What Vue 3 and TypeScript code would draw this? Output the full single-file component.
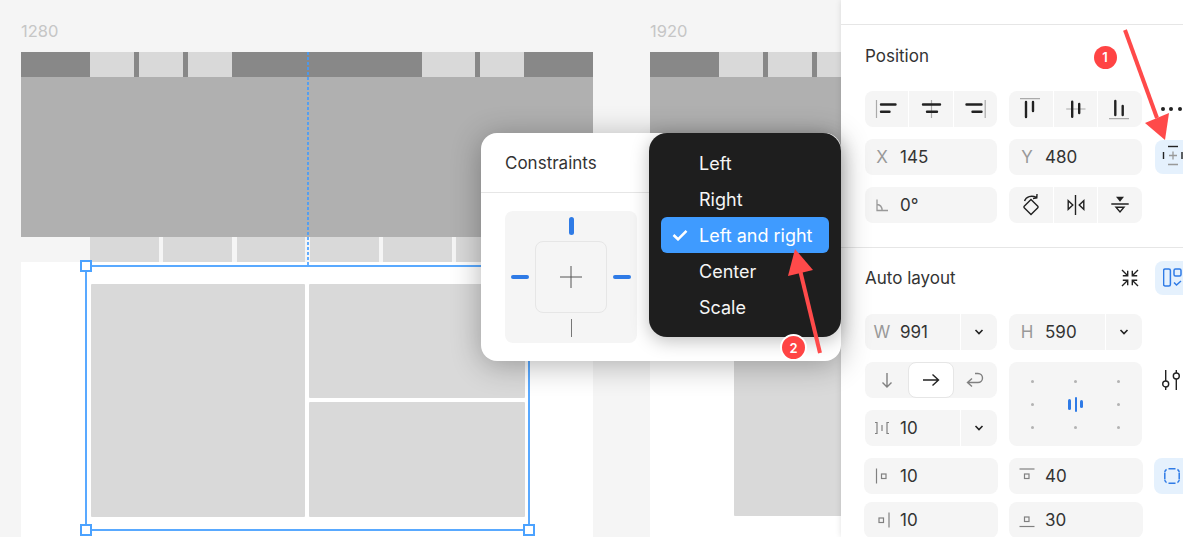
<script setup lang="ts">
type HeaderCell = { width: number; dark: boolean }

const headerCells: HeaderCell[] = [
  { width: 69, dark: true },
  { width: 44, dark: false },
  { width: 5, dark: true },
  { width: 44, dark: false },
  { width: 5, dark: true },
  { width: 44, dark: false },
  { width: 190, dark: true },
  { width: 53, dark: false },
  { width: 5, dark: true },
  { width: 44, dark: false },
  { width: 69, dark: true }
]

const frames = ['1280', '1920']
const constraintOptions = ['Left', 'Right', 'Left and right', 'Center', 'Scale']
const selectedOption = 'Left and right'
const alignDots = [0, 1, 2, 3, 5, 6, 7, 8]
</script>

<template>
  <div class="editor">
    <main class="canvas">
      <section v-for="(label, frameIndex) in frames" :key="label" class="frame">
        <div class="frame__label">{{ label }}</div>
        <div class="frame__header">
          <div
            v-for="(cell, i) in headerCells"
            :key="i"
            :class="cell.dark ? 'cell-dark' : 'cell-light'"
            :style="{ width: cell.width + 'px' }"
          ></div>
        </div>
        <div class="frame__hero"></div>
        <div class="frame__strip">
          <div v-for="n in 6" :key="n" class="cell-light"></div>
        </div>
        <div v-if="frameIndex === 0" class="frame__body">
          <div class="tile tile--tall"></div>
          <div class="tile"></div>
          <div class="tile"></div>
        </div>
        <div v-else class="frame__body frame__body--wide">
          <div class="tile"></div>
        </div>

        <template v-if="frameIndex === 0">
          <div class="guide"></div>
          <div class="selection">
            <span class="handle handle--tl"></span>
            <span class="handle handle--tr"></span>
            <span class="handle handle--bl"></span>
            <span class="handle handle--br"></span>
          </div>
        </template>
      </section>
    </main>

    <aside class="panel">
      <div class="panel__top"></div>

      <section class="section">
        <div class="section__head section__head--position">Position</div>

        <div class="row">
          <div class="group">
            <button class="group__cell"><svg class="ic" viewBox="0 0 24 24"><path class="g" d="M1.5 3v18"/><path class="b" d="M6 7.5h14.5M6 14.7h8.5"/></svg></button>
            <button class="group__cell"><svg class="ic" viewBox="0 0 24 24"><path class="g" d="M12.5 3v18"/><path class="b" d="M4 7.5h17M8 14.7h10"/></svg></button>
            <button class="group__cell"><svg class="ic" viewBox="0 0 24 24"><path class="g" d="M22.2 3v18"/><path class="b" d="M3.5 7.5h15M9.5 14.7h9"/></svg></button>
          </div>
          <div class="group group--wide">
            <button class="group__cell"><svg class="ic" viewBox="0 0 24 24"><path class="g" d="M1 1.7h20"/><path class="b" d="M7 5v15M14 5v9"/></svg></button>
            <button class="group__cell"><svg class="ic" viewBox="0 0 24 24"><path class="g" d="M2.2 12h19.3"/><path class="b" d="M8.2 4.7v15M15.2 7v9"/></svg></button>
            <button class="group__cell"><svg class="ic" viewBox="0 0 24 24"><path class="g" d="M1 21.7h20"/><path class="b" d="M7.3 4v14M14.7 9v9"/></svg></button>
          </div>
          <div class="more"><i></i><i></i><i></i></div>
        </div>

        <div class="row">
          <div class="field"><span class="field__label">X</span><span>145</span></div>
          <div class="field field--right"><span class="field__label">Y</span><span>480</span></div>
          <button class="toggle">
            <svg width="28" height="24" viewBox="0 0 28 24"><path class="line-dark" d="M12 1.500h10"/><path class="line-grey" d="M12 19.500h10M17 6.500v8M13 10.500h8"/><path class="line-dark" d="M7.500 7v7M26 7v7"/></svg>
          </button>
        </div>

        <div class="row">
          <div class="field">
            <span class="field__label">
              <svg width="14" height="14" viewBox="0 0 14 14"><path class="line-grey" d="M2 1.500v11h11M2 6.500c3 .2 5 2.500 5.200 6"/></svg>
            </span>
            <span>0°</span>
          </div>
          <div class="group group--wide">
            <button class="group__cell">
              <svg class="ic" viewBox="0 0 24 24">
                <path class="line-dark" d="M12 6.500l6.800 6.800a1 1 0 0 1 0 1.400L12 21.500l-6.800-6.800a1 1 0 0 1 0-1.400z"/>
                <path class="line-dark" d="M5.500 8c1.500-4.500 7-6 12-3.500M18 1l-.2 4-3.800.5"/>
              </svg>
            </button>
            <button class="group__cell">
              <svg class="ic" viewBox="0 0 24 24">
                <path class="line-dark" d="M11.500 2v20M4.200 7.700v8.600l4.600-4.300z"/>
                <path class="line-dark" d="M19.800 7.700v8.600l-4.600-4.300z"/>
              </svg>
            </button>
            <button class="group__cell">
              <svg class="ic" viewBox="0 0 24 24">
                <path class="line-dark" d="M3.300 11h17.400M8 14.300h8l-4 4.700z"/>
                <path class="solid" d="M8 3.700h8l-4 5z"/>
              </svg>
            </button>
          </div>
        </div>
      </section>

      <section class="section section--auto">
        <div class="section__head">
          <span>Auto layout</span>
          <div class="section__tools">
            <svg width="18" height="18" viewBox="0 0 18 18">
              <path class="line-dark" d="M1 1l5.500 5.500M6.700 1.800v4.900H1.800M17 1l-5.500 5.500M11.300 1.800v4.900h4.900M1 17l5.500-5.500M6.700 16.200v-4.900H1.800M17 17l-5.500-5.500M11.300 16.200v-4.900h4.900"/>
            </svg>
            <button class="toggle toggle--head">
              <svg width="22" height="20" viewBox="0 0 22 20">
                <rect class="line-blue" x=".6" y="1" width="6.800" height="17" rx="1.500"/>
                <rect class="line-blue" x="11" y="1" width="7" height="7" rx="1.500"/>
                <path class="line-blue" d="M11 14.500l2.500 2.500 4.500-4"/>
              </svg>
            </button>
          </div>
        </div>

        <div class="row">
          <div class="field field--select">
            <span class="field__label">W</span><span class="field__value">991</span>
            <span class="field__chevron"><svg width="10" height="6" viewBox="0 0 10 6"><path class="line-dark line-bold" d="M1.500 1l3.500 3.500L8.500 1"/></svg></span>
          </div>
          <div class="field field--select field--right field--wide">
            <span class="field__label">H</span><span class="field__value">590</span>
            <span class="field__chevron"><svg width="10" height="6" viewBox="0 0 10 6"><path class="line-dark line-bold" d="M1.500 1l3.500 3.500L8.500 1"/></svg></span>
          </div>
        </div>

        <div class="flow">
          <div class="flow__left">
            <div class="direction">
              <button class="direction__btn">
                <svg width="16" height="16" viewBox="0 0 16 16"><path class="line-mid" d="M8 1v14M3.500 10.500L8 15l4.500-4.500"/></svg>
              </button>
              <button class="direction__btn direction__btn--on">
                <svg width="18" height="16" viewBox="0 0 18 16"><path class="line-dark" d="M1 8h15.500M10.500 2.500L16.500 8l-6 5.500"/></svg>
              </button>
              <button class="direction__btn">
                <svg width="18" height="16" viewBox="0 0 18 16"><path class="line-mid" d="M6 14.500L1.500 10.500 6 6.500M1.500 10.500h10.500a4.500 4.500 0 0 0 0-9H9"/></svg>
              </button>
            </div>
            <div class="field field--select">
              <span class="field__label">
                <svg width="16" height="14" viewBox="0 0 16 14"><path class="line-grey-dark" d="M1 1.500h2v11H1M8 4v6M15 1.500h-2v11h2"/></svg>
              </span>
              <span class="field__value">10</span>
              <span class="field__chevron"><svg width="10" height="6" viewBox="0 0 10 6"><path class="line-dark line-bold" d="M1.500 1l3.500 3.500L8.500 1"/></svg></span>
            </div>
          </div>

          <div class="align-grid">
            <template v-for="i in alignDots" :key="i">
              <span class="align-grid__dot" :style="{ gridColumn: (i % 3) + 1, gridRow: Math.floor(i / 3) + 1 }"></span>
            </template>
            <span class="align-grid__active">
              <i class="bar bar--mid"></i><i class="bar bar--long"></i><i class="bar bar--short"></i>
            </span>
          </div>

          <svg class="sliders" width="18" height="22" viewBox="0 0 18 22">
            <path class="line-dark" d="M3.700 1v11M3.700 18v3M14.300 1v3M14.300 10v11"/>
            <circle class="line-dark" cx="3.700" cy="15" r="3"/>
            <circle class="line-dark" cx="14.300" cy="7" r="3"/>
          </svg>
        </div>

        <div class="row row--padding">
          <div class="field">
            <span class="field__label">
              <svg width="16" height="16" viewBox="0 0 16 16"><path class="line-grey-dark" d="M2.500 .5v15"/><rect class="line-grey-dark" x="7.500" y="6" width="4.500" height="4.500"/></svg>
            </span>
            <span>10</span>
          </div>
          <div class="field field--right">
            <span class="field__label">
              <svg width="16" height="16" viewBox="0 0 16 16"><path class="line-grey-dark" d="M.5 1h15"/><rect class="line-grey-dark" x="5.500" y="6" width="4.500" height="4.500"/></svg>
            </span>
            <span>40</span>
          </div>
          <button class="toggle toggle--padding">
            <svg width="16" height="16" viewBox="0 0 16 16"><path class="line-blue" d="M4.500 .8h7M4.500 15.200h7M.8 4.500v7M15.200 4.500v7M.8 4a3.400 3.400 0 0 1 1.800-2.500M15.200 4a3.400 3.400 0 0 0-1.800-2.500M.8 12a3.400 3.400 0 0 0 1.800 2.500M15.200 12a3.400 3.400 0 0 1-1.800 2.500"/></svg>
          </button>
        </div>
        <div class="row row--padding">
          <div class="field">
            <span class="field__label">
              <svg width="16" height="16" viewBox="0 0 16 16"><rect class="line-grey-dark" x="5" y="6" width="4.500" height="4.500"/><path class="line-grey-dark" d="M15 .5v15"/></svg>
            </span>
            <span>10</span>
          </div>
          <div class="field field--right">
            <span class="field__label">
              <svg width="16" height="16" viewBox="0 0 16 16"><rect class="line-grey-dark" x="5.500" y="5" width="4.500" height="4.500"/><path class="line-grey-dark" d="M.5 14.500h15"/></svg>
            </span>
            <span>30</span>
          </div>
        </div>
      </section>
    </aside>

    <div class="popover">
      <div class="popover__head">Constraints</div>
      <div class="popover__body">
        <div class="constraint">
          <span class="pin pin--v pin--top"></span>
          <span class="pin pin--h pin--left"></span>
          <div class="constraint__box">
            <svg width="22" height="22" viewBox="0 0 22 22"><path d="M11 0v22M0 11h22" stroke="#555" stroke-width="1" fill="none"/></svg>
          </div>
          <span class="pin pin--h pin--right"></span>
          <span class="pin pin--thin pin--bottom"></span>
        </div>
      </div>

      <ul class="menu">
        <li
          v-for="option in constraintOptions"
          :key="option"
          class="menu__item"
          :class="{ 'menu__item--on': option === selectedOption }"
        >
          <svg v-if="option === selectedOption" class="menu__check" width="16" height="12" viewBox="0 0 16 12"><path d="M1.500 6l4.500 4.300L14.500 1.800" stroke="#fff" stroke-width="2.600" fill="none"/></svg>
          {{ option }}
        </li>
      </ul>
    </div>

    <svg class="marks" width="1183" height="537" viewBox="0 0 1183 537">
      <path class="marks__line" d="M1125 30L1157 118"/>
      <path class="marks__head" d="M1165 140L1145 123L1169 113z"/>
      <path class="marks__line" d="M820 353L800 270"/>
      <path class="marks__head" d="M795 249L788 276L813 270z"/>
    </svg>
    <span class="badge badge--one">1</span>
    <span class="badge badge--two">2</span>
  </div>
</template>

<style>
html,
body {
  margin: 0;
  background: #fff;
}
</style>

<style scoped>
.editor {
  position: relative;
  display: flex;
  width: 1183px;
  height: 537px;
  overflow: hidden;
  font-family: Inter, "Liberation Sans", sans-serif;
  font-size: 17px;
  color: #333;
}

button {
  appearance: none;
  border: none;
  padding: 0;
  background: transparent;
  font: inherit;
}

svg {
  display: block;
  fill: none;
}

/* canvas */
.canvas {
  flex: 0 0 841px;
  display: flex;
  gap: 57px;
  padding: 21px 0 0 21px;
  box-sizing: border-box;
  overflow: hidden;
  background: #f5f5f5;
}

.frame {
  position: relative;
  flex: 0 0 572px;
}

.frame__label {
  height: 20px;
  margin-bottom: 11px;
  font-size: 16.500px;
  line-height: 20px;
  color: #c6c6c6;
}

.frame__header {
  display: flex;
  height: 25px;
}

.cell-dark {
  background: #888;
}

.cell-light {
  background: #d9d9d9;
}

.frame__hero {
  height: 160px;
  background: #b0b0b0;
}

.frame__strip {
  display: grid;
  grid-template-columns: repeat(6, 1fr);
  gap: 4.500px;
  width: 435px;
  height: 25px;
  margin-left: 69px;
}

.frame__body {
  display: grid;
  grid-template-columns: 214px 216px;
  grid-template-rows: 114px 115px;
  gap: 4px;
  height: 275px;
  padding: 22px 0 0 70px;
  box-sizing: border-box;
  background: #fff;
}

.frame__body--wide {
  grid-template-columns: 300px;
  grid-template-rows: 232px;
  padding-left: 84px;
}

.tile {
  border-radius: 1px;
  background: #d9d9d9;
}

.tile--tall {
  grid-row: span 2;
}

.guide {
  position: absolute;
  left: 286px;
  top: 31px;
  width: 2px;
  height: 213px;
  background: repeating-linear-gradient(to bottom, rgba(63, 155, 255, 0.8) 0 3px, transparent 3px 5px);
}

.selection {
  position: absolute;
  left: 64px;
  top: 244px;
  width: 441px;
  height: 262px;
  border: 2px solid #59a9ff;
}

.handle {
  position: absolute;
  width: 8px;
  height: 8px;
  border: 2px solid #4ba2ff;
  background: #fff;
}

.handle--tl { left: -7px; top: -7px; }
.handle--tr { right: -7px; top: -7px; }
.handle--bl { left: -7px; bottom: -7px; }
.handle--br { right: -7px; bottom: -7px; }

/* right panel */
.panel {
  flex: 1;
  min-width: 0;
  overflow: hidden;
  background: #fff;
  box-shadow: 0 0 6px rgba(0, 0, 0, 0.12);
  z-index: 1;
}

.panel__top {
  height: 24px;
  border-bottom: 1px solid #e6e6e6;
}

.section {
  padding: 21px 0 24px 24px;
  border-bottom: 1px solid #e6e6e6;
}

.section--auto {
  padding: 13px 0 0 24px;
  border-bottom: none;
}

.section__head {
  display: flex;
  align-items: center;
  justify-content: space-between;
  width: 334px;
  height: 34px;
  margin-bottom: 19px;
  font-size: 17px;
}

.section__head--position {
  height: 20px;
  margin-bottom: 25px;
}

.section__tools {
  display: flex;
  align-items: center;
  gap: 16px;
  flex: 0 0 auto;
}

.row {
  display: flex;
  align-items: center;
  gap: 12px;
  height: 36px;
  margin-bottom: 12px;
  width: 340px;
}

.row:last-child {
  margin-bottom: 0;
}

.group,
.field {
  flex: 0 0 132px;
  height: 36px;
  box-sizing: border-box;
  border-radius: 8px;
  background: #f5f5f5;
}

.group {
  display: flex;
  gap: 1px;
  overflow: hidden;
  background: #fff;
}

.group--wide,
.field--wide {
  flex-basis: 133px;
}

.group__cell {
  flex: 1;
  display: flex;
  align-items: center;
  justify-content: center;
  background: #f5f5f5;
}

.ic {
  width: 24px;
  height: 24px;
}

.ic .g {
  stroke: #aaa;
  stroke-width: 1.200;
}

.ic .b {
  stroke: #222;
  stroke-width: 2.400;
  stroke-linecap: round;
}

.solid {
  fill: #222;
}

.line-dark {
  stroke: #222;
  stroke-width: 1.400;
  fill: none;
}

.line-bold {
  stroke-width: 1.600;
}

.line-grey {
  stroke: #999;
  stroke-width: 1.300;
  fill: none;
}

.line-grey-dark {
  stroke: #808080;
  stroke-width: 1.200;
  fill: none;
}

.line-mid {
  stroke: #808080;
  stroke-width: 1.400;
  fill: none;
}

.line-blue {
  stroke: #2f7be6;
  stroke-width: 1.500;
  fill: none;
}

.more {
  display: flex;
  gap: 4.300px;
  margin: 0 0 0 7px;
  flex: 0 0 auto;
}

.more i {
  width: 4px;
  height: 4px;
  border-radius: 50%;
  background: #222;
}

.field {
  display: flex;
  align-items: center;
  padding-left: 5px;
  line-height: 36px;
}

.field--right {
  padding-left: 6px;
  flex-basis: 133px;
}

.field__label {
  display: flex;
  align-items: center;
  justify-content: center;
  flex: 0 0 24px;
  margin-right: 6px;
  color: #999;
}

.field--select {
  position: relative;
  overflow: hidden;
}

.field__value {
  flex: 1;
}

.field__chevron {
  display: flex;
  align-items: center;
  justify-content: center;
  align-self: stretch;
  flex: 0 0 36px;
  border-left: 1px solid #fff;
}

.toggle {
  display: flex;
  align-items: center;
  justify-content: flex-start;
  flex: 0 0 auto;
  width: 44px;
  height: 34px;
  padding-left: 1px;
  margin-left: 1px;
  border-radius: 8px;
  background: #e5f1fd;
}

.toggle--head {
  padding-left: 8px;
  margin-left: 0;
}

.toggle--padding {
  height: 36px;
  margin-left: 0;
  padding-left: 10px;
}

.flow {
  display: flex;
  gap: 12px;
  margin-bottom: 12px;
}

.flow__left {
  display: flex;
  flex-direction: column;
  gap: 12px;
  flex: 0 0 132px;
}

.flow__left .field {
  flex: 0 0 36px;
}

.direction {
  display: flex;
  height: 36px;
  border-radius: 8px;
  background: #f5f5f5;
}

.direction__btn {
  flex: 1;
  display: flex;
  align-items: center;
  justify-content: center;
  box-sizing: border-box;
  border-radius: 8px;
}

.direction__btn--on {
  border: 1px solid #e6e6e6;
  background: #fff;
}

.align-grid {
  position: relative;
  flex: 0 0 133px;
  display: grid;
  grid-template-columns: repeat(3, 43px);
  grid-template-rows: repeat(3, 23px);
  justify-content: center;
  align-content: center;
  justify-items: center;
  align-items: center;
  height: 84px;
  box-sizing: border-box;
  border-radius: 8px;
  background: #f5f5f5;
}

.align-grid__dot {
  width: 3px;
  height: 3px;
  border-radius: 50%;
  background: #b3b3b3;
}

.align-grid__active {
  grid-column: 2;
  grid-row: 2;
  display: flex;
  align-items: center;
  gap: 3.500px;
}

.bar {
  width: 3px;
  border-radius: 2px;
  background: #2f7be6;
}

.bar--mid { height: 11px; }
.bar--long { height: 15px; width: 2px; }
.bar--short { height: 8px; }

.sliders {
  flex: 0 0 auto;
  margin: 7px 0 0 8px;
}

.row--padding {
  width: 341px;
  margin-left: -1px;
  margin-bottom: 8px;
  gap: 11px;
}

.row--padding .field {
  flex-basis: 134px;
  padding-left: 6px;
}

/* constraints popover */
.popover {
  position: absolute;
  left: 481px;
  top: 133px;
  z-index: 2;
  width: 360px;
  height: 228px;
  border-radius: 16px;
  background: #fff;
  box-shadow: 0 4px 30px rgba(0, 0, 0, 0.3);
}

.popover__head {
  height: 59px;
  padding-left: 24px;
  border-bottom: 1px solid #e6e6e6;
  font-size: 17px;
  line-height: 60px;
  color: #333;
}

.popover__body {
  padding: 18px 0 0 24px;
}

.constraint {
  display: grid;
  grid-template-columns: 18px 72px 18px;
  grid-template-rows: 18px 72px 18px;
  gap: 6px;
  justify-items: center;
  align-items: center;
  width: 132px;
  height: 132px;
  padding: 6px;
  box-sizing: border-box;
  border-radius: 8px;
  background: #f5f5f5;
}

.constraint__box {
  grid-column: 2;
  grid-row: 2;
  display: flex;
  align-items: center;
  justify-content: center;
  width: 72px;
  height: 72px;
  box-sizing: border-box;
  border: 1px solid #e6e6e6;
  border-radius: 8px;
}

.pin {
  border-radius: 3px;
  background: #2f7be6;
}

.pin--v {
  width: 5px;
  height: 18px;
}

.pin--h {
  width: 18px;
  height: 4px;
}

.pin--thin {
  width: 1px;
  height: 18px;
  border-radius: 0;
  background: #777;
}

.pin--top { grid-column: 2; grid-row: 1; }
.pin--left { grid-column: 1; grid-row: 2; }
.pin--right { grid-column: 3; grid-row: 2; }
.pin--bottom { grid-column: 2; grid-row: 3; }

.menu {
  position: absolute;
  right: 0;
  top: 0;
  width: 192px;
  height: 204px;
  margin: 0;
  padding: 12px;
  box-sizing: border-box;
  list-style: none;
  border-radius: 18px;
  background: #1e1e1e;
  box-shadow: 0 4px 18px rgba(0, 0, 0, 0.25);
}

.menu__item {
  position: relative;
  height: 36px;
  padding-left: 38px;
  border-radius: 6px;
  font-size: 18px;
  line-height: 37px;
  color: #f5f5f5;
}

.menu__item--on {
  background: #3f9bff;
  color: #fff;
}

.menu__check {
  position: absolute;
  left: 11px;
  top: 12px;
}

/* annotations */
.marks {
  position: absolute;
  left: 0;
  top: 0;
  z-index: 3;
  pointer-events: none;
}

.marks__line {
  stroke: #ff4a4a;
  stroke-width: 4;
}

.marks__head {
  fill: #ff4a4a;
}

.badge {
  position: absolute;
  z-index: 4;
  display: flex;
  align-items: center;
  justify-content: center;
  width: 23px;
  height: 23px;
  border-radius: 50%;
  background: #f44;
  font-size: 13px;
  font-weight: 600;
  color: #fff;
}

.badge--one {
  left: 1093.500px;
  top: 45.500px;
}

.badge--two {
  left: 780px;
  top: 334px;
  border: 2px solid #fff;
}
</style>
